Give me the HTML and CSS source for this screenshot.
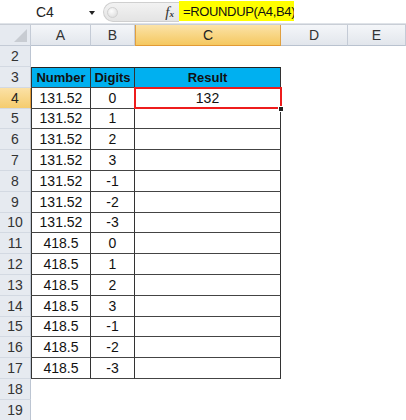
FILE: index.html
```html
<!DOCTYPE html>
<html>
<head>
<meta charset="utf-8">
<link rel="stylesheet" href="styles.css">
</head>
<body>
<div class="app">
  <div class="fbar">
    <div class="namebox"><span class="ref">C4</span><span class="drop"></span></div>
    <div class="pill"><span class="knob"></span><span class="fx"><i>f</i><small>x</small></span></div>
    <div class="formula">=ROUNDUP(A4,B4)</div>
    <div class="rest"></div>
  </div>
  <div class="strip"></div>
  <div class="sheet">
    <div class="corner"><span class="tri"></span></div>
    <div class="ch">A</div><div class="ch">B</div><div class="ch sel">C</div><div class="ch">D</div><div class="ch">E</div>

    <div class="rh">2</div><div></div><div></div><div></div><div></div><div></div>

    <div class="rh">3</div><div class="t ta th">Number</div><div class="t th">Digits</div><div class="t th">Result</div><div></div><div></div>

    <div class="rh rsel">4</div><div class="t ta">131.52</div><div class="t">0</div><div class="t active">132<span class="handle"></span></div><div></div><div></div>
    <div class="rh">5</div><div class="t ta">131.52</div><div class="t">1</div><div class="t"></div><div></div><div></div>
    <div class="rh">6</div><div class="t ta">131.52</div><div class="t">2</div><div class="t"></div><div></div><div></div>
    <div class="rh">7</div><div class="t ta">131.52</div><div class="t">3</div><div class="t"></div><div></div><div></div>
    <div class="rh">8</div><div class="t ta">131.52</div><div class="t">-1</div><div class="t"></div><div></div><div></div>
    <div class="rh">9</div><div class="t ta">131.52</div><div class="t">-2</div><div class="t"></div><div></div><div></div>
    <div class="rh">10</div><div class="t ta">131.52</div><div class="t">-3</div><div class="t"></div><div></div><div></div>
    <div class="rh">11</div><div class="t ta">418.5</div><div class="t">0</div><div class="t"></div><div></div><div></div>
    <div class="rh">12</div><div class="t ta">418.5</div><div class="t">1</div><div class="t"></div><div></div><div></div>
    <div class="rh">13</div><div class="t ta">418.5</div><div class="t">2</div><div class="t"></div><div></div><div></div>
    <div class="rh">14</div><div class="t ta">418.5</div><div class="t">3</div><div class="t"></div><div></div><div></div>
    <div class="rh">15</div><div class="t ta">418.5</div><div class="t">-1</div><div class="t"></div><div></div><div></div>
    <div class="rh">16</div><div class="t ta">418.5</div><div class="t">-2</div><div class="t"></div><div></div><div></div>
    <div class="rh">17</div><div class="t ta">418.5</div><div class="t">-3</div><div class="t"></div><div></div><div></div>

    <div class="rh">18</div><div></div><div></div><div></div><div></div><div></div>
    <div class="rh">19</div><div></div><div></div><div></div><div></div><div></div>
  </div>
</div>
</body>
</html>
```

FILE: styles.css
```css
* { box-sizing: border-box; }
html, body { margin: 0; padding: 0; background: #fff; }
body { width: 406px; height: 420px; overflow: hidden; font-family: "Liberation Sans", Arial, sans-serif; color: #111; }

.app { width: 406px; }

.fbar { display: flex; height: 23px; background: #fff; align-items: stretch; }
.namebox { width: 101px; display: flex; align-items: center; position: relative; font-size: 14px; color: #222; }
.ref { margin-left: 36px; }
.drop { position: absolute; left: 89px; top: 11px; width: 0; height: 0; border-left: 3.5px solid transparent; border-right: 3.5px solid transparent; border-top: 4px solid #222; }
.pill { width: 76px; margin: 2px 0 1px 2px; background: linear-gradient(#f2f2f2, #e4e4e4); border: 1px solid #cfcfcf; border-right: none; border-radius: 10px 0 0 10px; display: flex; align-items: center; justify-content: space-between; padding: 0 5px 0 3px; }
.knob { width: 11px; height: 11px; border-radius: 50%; background: radial-gradient(circle at 40% 35%, #fdfdfd, #d8d8d8); border: 1px solid #d0d0d0; }
.fx { font-family: "Liberation Serif", serif; font-size: 15px; color: #333; line-height: 1; }
.fx i { font-style: italic; }
.fx small { font-size: 9px; font-style: italic; font-weight: bold; }
.formula { width: 115px; margin: 1px 0 2px 0; background: #ffff00; font-size: 13px; letter-spacing: -0.35px; display: flex; align-items: center; padding-left: 4px; color: #111; white-space: nowrap; overflow: hidden; }
.rest { flex: 1; }

.strip { height: 2px; background: #dfe3e8; border-bottom: 1px solid #c9ced6; }

.sheet { display: grid; grid-template-columns: 31px 60px 44px 146px 67px 1fr; grid-template-rows: 21px 21px repeat(15, 20.8px) 21px 21px; font-size: 14px; }
.sheet > div { display: flex; align-items: center; justify-content: center; position: relative; }

.corner { background: #e6eaf0; border-right: 1px solid #c4cbd6; border-bottom: 1px solid #c4cbd6; }
.tri { position: absolute; right: 3px; bottom: 3px; width: 0; height: 0; border-left: 13px solid transparent; border-bottom: 13px solid #c8ccd2; }
.ch { background: linear-gradient(#f4f6f9, #e2e6ec); border-right: 1px solid #c4cbd6; border-bottom: 1px solid #b9c2cf; color: #333; font-size: 14px; }
.ch.sel { background: linear-gradient(#fbe3a8, #f5c860); border-right: 1px solid #e0a040; border-bottom: 1px solid #e29a35; border-left: 1px solid #e0a040; color: #222; }

.rh { background: #e6eaf0; border-right: 1px solid #bcc5d2; border-bottom: 1px solid #d3d9e2; color: #333; font-size: 14px; }
.rh.rsel { background: linear-gradient(#fbe1a6, #f5cc6e); border-right: 1px solid #e29a35; color: #222; }

.t { border-right: 1px solid #333; border-bottom: 1px solid #444; }
.ta { border-left: 1px solid #333; }
.th { background: #00b0f0; border-top: 1px solid #222; font-weight: bold; font-size: 13px; color: #111; }

.active::after { content: ""; position: absolute; left: -1px; top: -1px; right: -2px; bottom: -1px; border: 2px solid #ee1c1c; }
.handle { position: absolute; right: -4px; bottom: -4px; width: 6px; height: 6px; background: #222; border: 1px solid #fff; z-index: 2; }
```
